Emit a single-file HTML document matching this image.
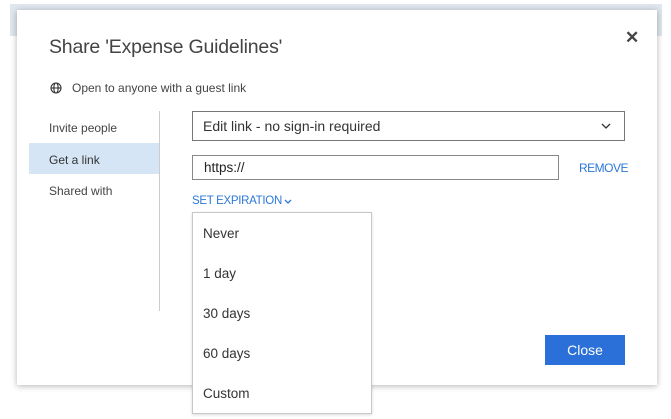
<html><head><style>
body{margin:0;width:671px;height:419px;background:#fff;position:relative;overflow:hidden;font-family:"Liberation Sans",sans-serif;color:#333}
.a{position:absolute}
</style></head><body>
<div class="a" style="left:10px;top:4px;width:652px;height:32px;background:#dfe6ee"></div>
<div class="a" style="left:17px;top:10px;width:640px;height:375px;background:#fff;box-shadow:0 1px 6px rgba(0,0,0,.3)"></div>
<div class="a" style="left:49px;top:36px;font-size:19.5px;color:#444;letter-spacing:-0.2px">Share 'Expense Guidelines'</div>
<svg class="a" style="left:50px;top:82px" width="12" height="12" viewBox="0 0 12 12" fill="none" stroke="#333" stroke-width="1.1"><circle cx="6" cy="6" r="5"/><ellipse cx="6" cy="6" rx="2.2" ry="5"/><line x1="1" y1="6" x2="11" y2="6"/></svg>
<div class="a" style="left:72px;top:81px;font-size:12px;color:#444">Open to anyone with a guest link</div>
<div class="a" style="left:625px;top:28px;font-size:17px;font-weight:bold;color:#444">✕</div>
<div class="a" style="left:49px;top:121px;font-size:12px;color:#444">Invite people</div>
<div class="a" style="left:29px;top:143px;width:130px;height:31px;background:#d5e5f5"></div>
<div class="a" style="left:49px;top:153px;font-size:12px;color:#333">Get a link</div>
<div class="a" style="left:49px;top:184px;font-size:12px;color:#444">Shared with</div>
<div class="a" style="left:159px;top:111px;width:1px;height:200px;background:#ccc"></div>
<div class="a" style="left:192px;top:111px;width:431px;height:28px;border:1px solid #777"></div>
<div class="a" style="left:203px;top:118px;font-size:14px;color:#333">Edit link - no sign-in required</div>
<svg class="a" style="left:601px;top:123px" width="10" height="6"><path d="M1 1l4 4 4-4" stroke="#333" stroke-width="1.3" fill="none"/></svg>
<div class="a" style="left:192px;top:155px;width:365px;height:23px;border:1px solid #888"></div>
<div class="a" style="left:204px;top:160px;font-size:13.5px;color:#222">https://</div>
<div class="a" style="left:579px;top:161px;font-size:12px;color:#2b78d8;letter-spacing:-0.5px">REMOVE</div>
<div class="a" style="left:192px;top:195px;font-size:11.5px;color:#2b78d8;letter-spacing:-0.3px">SET EXPIRATION</div>
<svg class="a" style="left:284px;top:199px" width="8" height="5"><path d="M1 1l3 3 3-3" stroke="#2b78d8" stroke-width="1.3" fill="none"/></svg>
<div class="a" style="left:192px;top:212px;width:178px;height:200px;background:#fff;border:1px solid #c8c8c8;box-shadow:0 1px 3px rgba(0,0,0,.15);font-size:13.5px;color:#333">
<div class="a" style="left:10px;top:13px">Never</div>
<div class="a" style="left:10px;top:53px">1 day</div>
<div class="a" style="left:10px;top:93px">30 days</div>
<div class="a" style="left:10px;top:133px">60 days</div>
<div class="a" style="left:10px;top:173px">Custom</div>
</div>
<div class="a" style="left:545px;top:335px;width:80px;height:30px;background:#2b70d8;color:#fff;font-size:14px;text-align:center;line-height:30px">Close</div>
</body></html>
